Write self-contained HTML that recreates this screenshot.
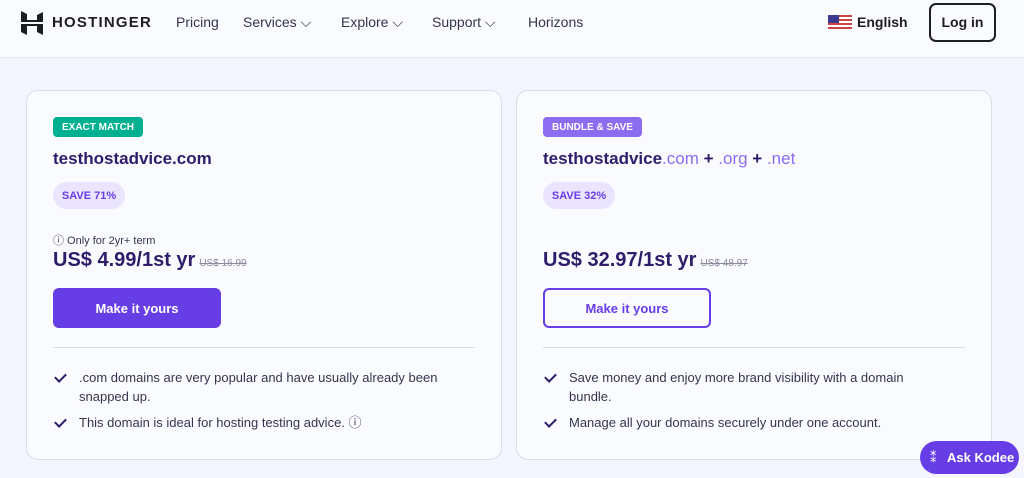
<!DOCTYPE html>
<html><head><meta charset="utf-8"><style>
*{box-sizing:border-box;margin:0;padding:0}
body{width:1024px;height:478px;overflow:hidden;background:#f4f5ff;font-family:"Liberation Sans",sans-serif;color:#2f1c6a;position:relative}
.hdr{position:absolute;left:0;top:0;width:1024px;height:58px;background:#fafbff;border-bottom:1px solid #e6e7ee}
.nav{position:absolute;top:14px;font-size:14px;color:#36344d}
.card{position:absolute;top:90px;width:476px;height:370px;background:#fafbff;border:1px solid #dadce8;border-radius:12px}
.tag{position:absolute;left:26px;top:26px;height:20px;padding:0 9px;border-radius:4px;font-size:10px;font-weight:bold;color:#fff;display:flex;align-items:center}
.dom{position:absolute;left:26px;top:58px;font-size:17px;font-weight:bold}
.save{position:absolute;left:26px;top:91px;height:27px;width:72px;border-radius:14px;background:#ebe4ff;color:#673de6;font-size:11px;font-weight:bold;display:flex;align-items:center;justify-content:center}
.price{position:absolute;left:26px;top:158px;font-size:20px;font-weight:bold}
.price s{font-size:10px;color:#8c8aa0;font-weight:normal;margin-left:4px}
.btn{position:absolute;left:26px;top:197px;width:168px;height:40px;border-radius:6px;font-size:13px;font-weight:bold;display:flex;align-items:center;justify-content:center}
.hr{position:absolute;left:26px;right:26px;top:256px;border-top:1px solid #dadce8}
.li{position:absolute;left:26px;font-size:13px;color:#36344d;line-height:19px;padding-left:26px}
.li:before{content:"";position:absolute;left:4px;top:3px;width:5px;height:9px;border:solid #2f1c6a;border-width:0 2px 2px 0;transform:rotate(45deg)}
</style></head><body>
<div class="hdr">
<svg style="position:absolute;left:21px;top:11px" width="22" height="24" viewBox="0 0 22 24"><path d="M0 0l6 3v6h10V4l6-3v10H0z M0 13h22v11l-6-3v-6H6v9l-6-3z" fill="#1d1e20"/></svg>
<div style="position:absolute;left:52px;top:14px;font-size:15px;font-weight:bold;letter-spacing:1.2px;color:#1d1e20">HOSTINGER</div>
<div class="nav" style="left:176px">Pricing</div>
<div class="nav" style="left:243px">Services ⌵</div>
<div class="nav" style="left:341px">Explore ⌵</div>
<div class="nav" style="left:432px">Support ⌵</div>
<div class="nav" style="left:528px">Horizons</div>
<div style="position:absolute;left:828px;top:15px;width:24px;height:14px;background:repeating-linear-gradient(#c44 0 2px,#fff 2px 4px)"><div style="width:11px;height:8px;background:#3c3b8e"></div></div>
<div style="position:absolute;left:857px;top:14px;font-size:14px;font-weight:bold;color:#1d1e20">English</div>
<div style="position:absolute;left:929px;top:3px;width:67px;height:39px;border:2px solid #1d1e20;border-radius:7px;font-size:14px;font-weight:bold;text-align:center;line-height:35px;color:#1d1e20">Log in</div>
</div>
<div class="card" style="left:26px">
<div class="tag" style="background:#00b090">EXACT MATCH</div>
<div class="dom">testhostadvice.com</div>
<div class="save">SAVE 71%</div>
<div style="position:absolute;left:26px;top:141px;font-size:11px;color:#36344d">ⓘ Only for 2yr+ term</div>
<div class="price">US$ 4.99/1st yr<s>US$ 16.99</s></div>
<div class="btn" style="background:#673de6;color:#fff">Make it yours</div>
<div class="hr"></div>
<div class="li" style="top:277px;width:420px">.com domains are very popular and have usually already been snapped up.</div>
<div class="li" style="top:322px">This domain is ideal for hosting testing advice. ⓘ</div>
</div>
<div class="card" style="left:516px">
<div class="tag" style="background:#8c6cf0">BUNDLE &amp; SAVE</div>
<div class="dom">testhostadvice<span style="color:#8c6cf0;font-weight:normal">.com</span> + <span style="color:#8c6cf0;font-weight:normal">.org</span> + <span style="color:#8c6cf0;font-weight:normal">.net</span></div>
<div class="save">SAVE 32%</div>
<div class="price">US$ 32.97/1st yr<s>US$ 48.97</s></div>
<div class="btn" style="border:2px solid #673de6;color:#673de6">Make it yours</div>
<div class="hr"></div>
<div class="li" style="top:277px;width:400px">Save money and enjoy more brand visibility with a domain bundle.</div>
<div class="li" style="top:322px">Manage all your domains securely under one account.</div>
</div>
<div style="position:absolute;left:920px;top:441px;width:99px;height:33px;border-radius:17px;background:#673de6;color:#fff;font-size:13px;font-weight:bold;line-height:33px;padding-left:27px">Ask Kodee<span style="position:absolute;left:10px;font-weight:normal">⁑</span></div>
</body></html>
